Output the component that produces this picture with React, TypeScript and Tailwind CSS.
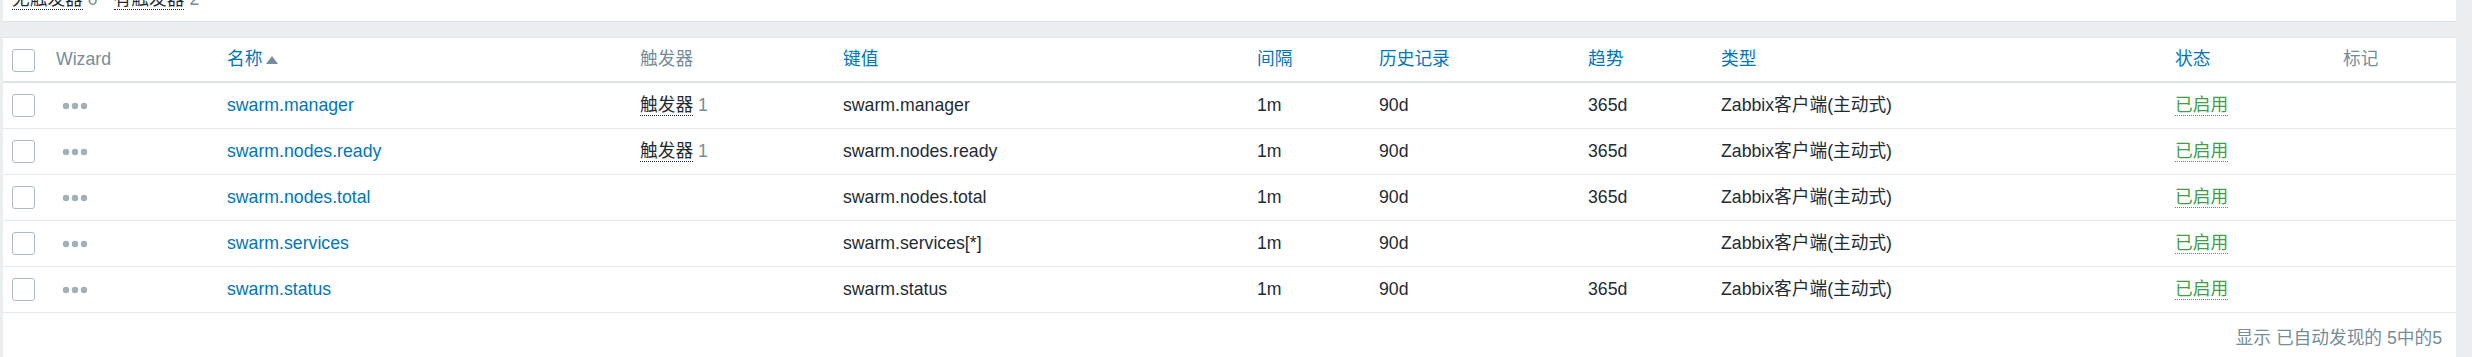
import React from "react";

const cols =
  "grid grid-cols-[44px_171px_413px_203px_414px_122px_209px_133px_454px_168px_1fr] items-center pl-[9px]";

type Row = {
  name: string;
  trig: boolean;
  key: string;
  trends: string;
};

const rows: Row[] = [
  { name: "swarm.manager", trig: true, key: "swarm.manager", trends: "365d" },
  { name: "swarm.nodes.ready", trig: true, key: "swarm.nodes.ready", trends: "365d" },
  { name: "swarm.nodes.total", trig: false, key: "swarm.nodes.total", trends: "365d" },
  { name: "swarm.services", trig: false, key: "swarm.services[*]", trends: "" },
  { name: "swarm.status", trig: false, key: "swarm.status", trends: "365d" },
];

function Checkbox() {
  return (
    <div className="w-[23px] h-[23px] rounded-[3px] border border-[#acbbc2] bg-white" />
  );
}

function Dots() {
  return (
    <svg width="26" height="8" viewBox="0 0 26 8" className="ml-[6px]">
      <circle cx="4" cy="4" r="3.2" fill="#a2b0b9" />
      <circle cx="13" cy="4" r="3.2" fill="#a2b0b9" />
      <circle cx="22" cy="4" r="3.2" fill="#a2b0b9" />
    </svg>
  );
}

export default function App() {
  return (
    <div className="h-[357px] w-[2472px] overflow-hidden bg-[#ebeef0] font-['Liberation_Sans','Noto_Sans_CJK_SC',sans-serif] text-[17.7px] text-[#1f2c33] pl-[3px] pr-[16px]">
      {/* top filter panel (partially visible) */}
      <div className="h-[22px] bg-white border-b border-[#dfe4e7] overflow-hidden">
        <div className="mt-[-11px] leading-[20px] pl-[9px] flex">
          <span className="border-b border-dotted border-[#1f2c33]">无触发器</span>
          <span className="ml-[5px] text-[#768d99]">0</span>
          <span className="ml-[16px] border-b border-dotted border-[#1f2c33]">有触发器</span>
          <span className="ml-[5px] text-[#768d99]">2</span>
        </div>
      </div>
      <div className="h-[15px]" />
      {/* table panel */}
      <div className="bg-white border-t border-[#dfe4e7] h-[400px]">
        <div className={`${cols} h-[45px] border-b-[2px] border-[#dde2e5]`}>
          <div className="pt-[1px]">
            <Checkbox />
          </div>
          <div className="text-[#768d99]">Wizard</div>
          <div className="text-[#0275b8] flex items-center">
            <span>名称</span>
            <svg width="12" height="8" viewBox="0 0 12 8" className="ml-[4px] mt-[2px]">
              <polygon points="6,0 12,8 0,8" fill="#768d99" />
            </svg>
          </div>
          <div className="text-[#768d99]">触发器</div>
          <div className="text-[#0275b8]">键值</div>
          <div className="text-[#0275b8]">间隔</div>
          <div className="text-[#0275b8]">历史记录</div>
          <div className="text-[#0275b8]">趋势</div>
          <div className="text-[#0275b8]">类型</div>
          <div className="text-[#0275b8]">状态</div>
          <div className="text-[#768d99]">标记</div>
        </div>
        {rows.map((r) => (
          <div key={r.name} className={`${cols} h-[46px] border-b border-[#e6eaec]`}>
            <div>
              <Checkbox />
            </div>
            <div>
              <Dots />
            </div>
            <div className="text-[#0275b8]">{r.name}</div>
            <div>
              {r.trig && (
                <>
                  <span className="border-b border-dotted border-[#1f2c33]">触发器</span>
                  <span className="ml-[5px] text-[#768d99]">1</span>
                </>
              )}
            </div>
            <div>{r.key}</div>
            <div>1m</div>
            <div>90d</div>
            <div>{r.trends}</div>
            <div>Zabbix客户端(主动式)</div>
            <div>
              <span className="text-[#429e47] border-b border-dotted border-[#429e47]">已启用</span>
            </div>
            <div />
          </div>
        ))}
        <div className="flex justify-end pr-[14px] pt-[12px] text-[#768d99]">
          显示 已自动发现的 5中的5
        </div>
      </div>
    </div>
  );
}
